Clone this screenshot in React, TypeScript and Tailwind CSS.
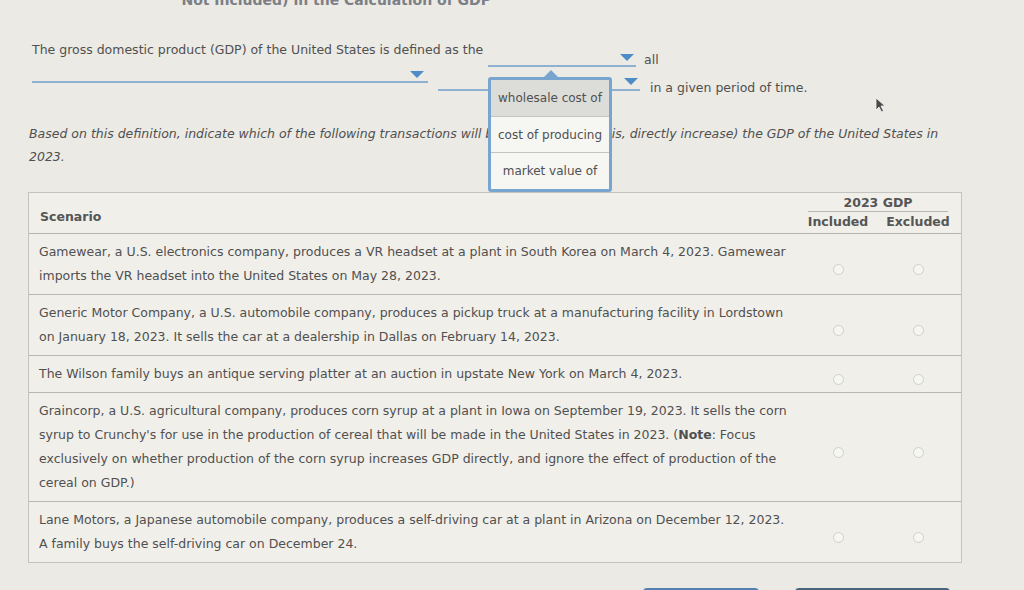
import React from "react";

function Tri() {
  return <div className="w-0 h-0 border-l-[7px] border-r-[7px] border-t-[7px] border-l-transparent border-r-transparent border-t-[#4f8bc6]" />;
}

function Radio() {
  return <div className="w-[11px] h-[11px] rounded-full border border-[#cfcfcb] bg-[#f6f6f3]" />;
}

const rows: React.ReactNode[][] = [
  [
    "Gamewear, a U.S. electronics company, produces a VR headset at a plant in South Korea on March 4, 2023. Gamewear",
    "imports the VR headset into the United States on May 28, 2023.",
  ],
  [
    "Generic Motor Company, a U.S. automobile company, produces a pickup truck at a manufacturing facility in Lordstown",
    "on January 18, 2023. It sells the car at a dealership in Dallas on February 14, 2023.",
  ],
  ["The Wilson family buys an antique serving platter at an auction in upstate New York on March 4, 2023."],
  [
    "Graincorp, a U.S. agricultural company, produces corn syrup at a plant in Iowa on September 19, 2023. It sells the corn",
    <>
      syrup to Crunchy's for use in the production of cereal that will be made in the United States in 2023. (<b className="font-bold">Note</b>: Focus
    </>,
    "exclusively on whether production of the corn syrup increases GDP directly, and ignore the effect of production of the",
    "cereal on GDP.)",
  ],
  [
    "Lane Motors, a Japanese automobile company, produces a self-driving car at a plant in Arizona on December 12, 2023.",
    "A family buys the self-driving car on December 24.",
  ],
];

export default function App() {
  return (
    <div className="relative w-[1024px] h-[590px] overflow-hidden bg-[#ebeae4] text-[#505050] font-['DejaVu_Sans',Verdana,sans-serif]">
      <div className="h-[9px] overflow-hidden flex justify-end w-[491px]">
        <div className="-mt-[7px] text-[14px] leading-[14px] font-bold text-[#7c7f87] whitespace-nowrap">
          Not Included) in the Calculation of GDP
        </div>
      </div>

      <div className="pl-[32px] pt-[32px] text-[12.5px]">
        <div className="flex items-start">
          <span className="w-[456px] whitespace-nowrap leading-[18px]">
            The gross domestic product (GDP) of the United States is defined as the
          </span>
          <div className="w-[148px] h-[26px] border-b-2 border-[#8fb0d0] flex justify-end items-end pb-[4px] pr-[2px]">
            <Tri />
          </div>
          <span className="ml-[8px] mt-[10px] leading-[18px]">all</span>
        </div>
        <div className="flex items-start">
          <div className="w-[396px] h-[14px] border-b-2 border-[#8fb0d0] flex justify-end items-end pb-[3px] pr-[4px]">
            <Tri />
          </div>
          <div className="ml-[10px] w-[202px] h-[22px] border-b-2 border-[#8fb0d0] flex justify-end items-end pb-[4px] pr-[2px]">
            <Tri />
          </div>
          <span className="ml-[10px] mt-[10px] leading-[18px] whitespace-nowrap">in a given period of time.</span>
        </div>

        <div className="mt-[25px] -ml-[3px] italic leading-[23px]">
          <div className="whitespace-nowrap">
            Based on this definition, indicate which of the following transactions will be included in (that is, directly increase) the GDP of the United States in
          </div>
          <div>2023.</div>
        </div>
      </div>

      <div className="mt-[24px] ml-[28px] w-[934px] border border-[#c4c4bf] bg-[#f0efea] text-[12.5px]">
        <div className="grid grid-cols-[1fr_80px_80px] pr-[3px] h-[41px] border-b border-[#b5b5b0] font-bold text-[#555]">
          <div className="flex items-end pl-[11px] pb-[8px] leading-[16px]">Scenario</div>
          <div className="col-span-2 pt-[2px]">
            <div className="mx-[10px] h-[17px] leading-[16px] text-center border-b border-[#b8b8b3]">2023 GDP</div>
            <div className="grid grid-cols-2 mt-[2px] leading-[16px] text-center">
              <span>Included</span>
              <span>Excluded</span>
            </div>
          </div>
        </div>
        {rows.map((lines, i) => (
          <div
            key={i}
            className={
              "grid grid-cols-[1fr_80px_80px] pr-[3px] " + (i < rows.length - 1 ? "border-b border-[#b8b8b3]" : "")
            }
          >
            <div className="pl-[10px] py-[6px] leading-[24px]">
              {lines.map((l, j) => (
                <div key={j} className="whitespace-nowrap">
                  {l}
                </div>
              ))}
            </div>
            <div className="flex items-center justify-center pt-[10px]">
              <Radio />
            </div>
            <div className="flex items-center justify-center pt-[10px]">
              <Radio />
            </div>
          </div>
        ))}
      </div>

      <div className="mt-[25px] flex">
        <div className="ml-[643px] w-[116px] h-[30px] rounded-[4px] bg-[#5380b0]" />
        <div className="ml-[36px] w-[155px] h-[30px] rounded-[4px] bg-[#4b647c]" />
      </div>

      <div className="absolute left-[488px] top-[77px] w-[124px] h-[115px] border-[3px] border-[#78a5cf] rounded-[3px] bg-[#f6f6f3] text-[12px] text-[#505050]">
        <div className="absolute -top-[10px] left-[52px] w-0 h-0 border-l-[8px] border-r-[8px] border-b-[8px] border-l-transparent border-r-transparent border-b-[#78a5cf]" />
        <div className="h-[37px] flex items-center justify-center bg-[#dcdcd9] border-b border-[#c4c4c0] whitespace-nowrap">
          wholesale cost of
        </div>
        <div className="h-[36px] flex items-center justify-center border-b border-[#c4c4c0] whitespace-nowrap">
          cost of producing
        </div>
        <div className="h-[36px] flex items-center justify-center whitespace-nowrap">market value of</div>
      </div>

      <svg className="absolute left-[875px] top-[97px]" width="12" height="16" viewBox="0 0 12 16">
        <path d="M1 1 L1 13 L4 10 L6.5 15 L8.5 14 L6 9 L10 9 Z" fill="#4a4a4a" stroke="#f4f4f0" strokeWidth="0.8" />
      </svg>
    </div>
  );
}
